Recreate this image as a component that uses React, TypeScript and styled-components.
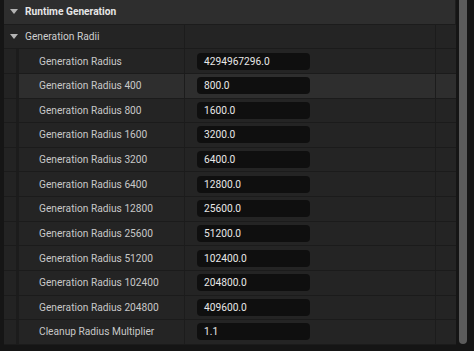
import React from "react";
import styled, { createGlobalStyle } from "styled-components";

const GlobalStyle = createGlobalStyle`
    html, body {
        margin: 0;
        padding: 0;
        background: #151515;
    }
    body {
        font-family: Roboto, "Liberation Sans", sans-serif;
    }
`;

const ROW_H = 24.64;
const FONT = "10.2px";

const Page = styled.div`
    display: flex;
    width: 474px;
    height: 351px;
    background: #151515;
    overflow: hidden;
`;

const Panel = styled.div`
    display: flex;
    flex-direction: column;
    width: 452px;
    margin-left: 4px;
    height: ${ROW_H * 14}px;
    background: #1b1b1b;
`;

const CategoryRow = styled.div`
    display: flex;
    align-items: center;
    height: ${ROW_H}px;
    box-sizing: border-box;
    background: #2e2e2e;
    border-bottom: 1px solid #1c1c1c;
    border-right: 1px solid #1e1e1e;
    padding-left: 6px;
    gap: 7px;
    color: #e6e6e6;
    font-size: ${FONT};
    font-weight: 700;
`;

const Arrow = styled.span`
    width: 0;
    height: 0;
    border-left: 4px solid transparent;
    border-right: 4px solid transparent;
    border-top: 5px solid #b4b4b4;
`;

const Row = styled.div`
    display: grid;
    grid-template-columns: 180px 251px 1fr;
    height: ${ROW_H}px;
    box-sizing: border-box;
    border-bottom: 1px solid #1b1b1b;
    background: #242424;
`;

const SectionName = styled.div`
    display: flex;
    align-items: center;
    gap: 7px;
    padding-left: 6px;
    color: #cfcfcf;
    font-size: ${FONT};
`;

const ChildName = styled.div`
    display: flex;
    height: 100%;
    background: #232323;
`;

const Indent = styled.div`
    width: 12px;
    flex: none;
    border-right: 3px solid #1c1c1c;
`;

const Label = styled.div<{ $hover?: boolean }>`
    flex: 1;
    display: flex;
    align-items: center;
    padding-left: 20px;
    color: #c8c8c8;
    font-size: ${FONT};
    background: ${(p) => (p.$hover ? "#2e2e2e" : "#242424")};
`;

const Cell = styled.div<{ $hover?: boolean }>`
    display: flex;
    align-items: center;
    border-left: 1px solid #1c1c1c;
    background: ${(p) => (p.$hover ? "#2e2e2e" : "#242424")};
    padding-left: 12px;
`;

const ValueBox = styled.div`
    box-sizing: border-box;
    width: 113px;
    height: 17px;
    border-radius: 4px;
    background: #0f0f0f;
    color: #e8e8e8;
    font-size: ${FONT};
    display: flex;
    align-items: center;
    padding-left: 7px;
`;

const ScrollArea = styled.div`
    width: 18px;
    display: flex;
    padding-left: 3px;
    box-sizing: border-box;
`;

const Thumb = styled.div`
    width: 8px;
    height: ${ROW_H * 14 - 1}px;
    background: #5b5b5b;
    border-radius: 0 0 4px 4px;
`;

const rows = [
    ["Generation Radius", "4294967296.0"],
    ["Generation Radius 400", "800.0"],
    ["Generation Radius 800", "1600.0"],
    ["Generation Radius 1600", "3200.0"],
    ["Generation Radius 3200", "6400.0"],
    ["Generation Radius 6400", "12800.0"],
    ["Generation Radius 12800", "25600.0"],
    ["Generation Radius 25600", "51200.0"],
    ["Generation Radius 51200", "102400.0"],
    ["Generation Radius 102400", "204800.0"],
    ["Generation Radius 204800", "409600.0"],
    ["Cleanup Radius Multiplier", "1.1"],
];

export default function App() {
    return (
        <Page>
            <GlobalStyle />
            <Panel>
                <CategoryRow>
                    <Arrow />
                    Runtime Generation
                </CategoryRow>
                <Row>
                    <SectionName>
                        <Arrow />
                        Generation Radii
                    </SectionName>
                    <Cell />
                    <Cell />
                </Row>
                {rows.map(([name, value], i) => {
                    const hover = i === 1;
                    return (
                        <Row key={name}>
                            <ChildName>
                                <Indent />
                                <Label $hover={hover}>{name}</Label>
                            </ChildName>
                            <Cell $hover={hover}>
                                <ValueBox>{value}</ValueBox>
                            </Cell>
                            <Cell $hover={hover} />
                        </Row>
                    );
                })}
            </Panel>
            <ScrollArea>
                <Thumb />
            </ScrollArea>
        </Page>
    );
}
